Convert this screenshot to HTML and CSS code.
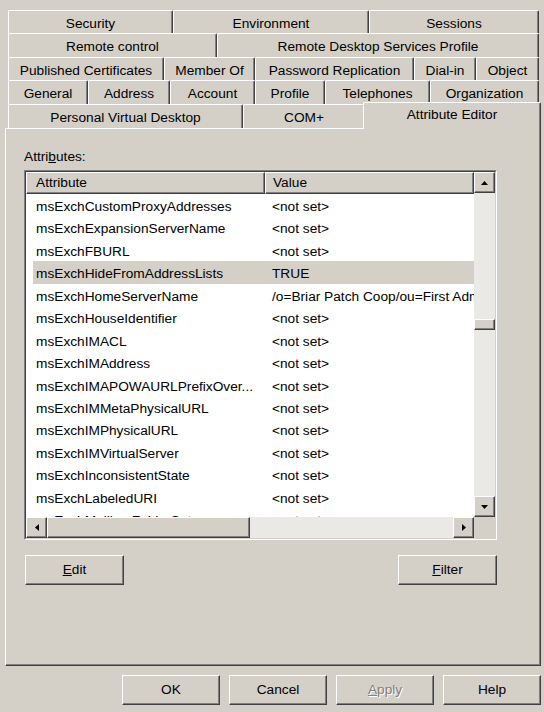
FILE: index.html
```html
<!DOCTYPE html>
<html>
<head>
<meta charset="utf-8">
<link rel="stylesheet" href="styles.css">
</head>
<body>
<div class="dialog">
  <div class="tabs">
    <div class="tabrow r1">
      <div class="tab">Security</div>
      <div class="tab">Environment</div>
      <div class="tab">Sessions</div>
    </div>
    <div class="tabrow r2">
      <div class="tab">Remote control</div>
      <div class="tab">Remote Desktop Services Profile</div>
    </div>
    <div class="tabrow r3">
      <div class="tab">Published Certificates</div>
      <div class="tab">Member Of</div>
      <div class="tab">Password Replication</div>
      <div class="tab">Dial-in</div>
      <div class="tab">Object</div>
    </div>
    <div class="tabrow r4">
      <div class="tab">General</div>
      <div class="tab">Address</div>
      <div class="tab">Account</div>
      <div class="tab">Profile</div>
      <div class="tab">Telephones</div>
      <div class="tab">Organization</div>
    </div>
    <div class="tabrow r5">
      <div class="tab">Personal Virtual Desktop</div>
      <div class="tab">COM+</div>
      <div class="tab sel">Attribute Editor</div>
    </div>
  </div>

  <div class="panel">
    <div class="label">Attri<u>b</u>utes:</div>
    <div class="listbox">
      <div class="listinner">
        <div class="listmain">
          <div class="lvheader">
            <div class="hcell h1">Attribute</div>
            <div class="hcell h2">Value</div>
          </div>
          <div class="lvrows">
            <div class="lvrow"><span class="c1">msExchCustomProxyAddresses</span><span class="c2">&lt;not set&gt;</span></div>
            <div class="lvrow"><span class="c1">msExchExpansionServerName</span><span class="c2">&lt;not set&gt;</span></div>
            <div class="lvrow"><span class="c1">msExchFBURL</span><span class="c2">&lt;not set&gt;</span></div>
            <div class="lvrow hl"><span class="c1">msExchHideFromAddressLists</span><span class="c2">TRUE</span></div>
            <div class="lvrow"><span class="c1">msExchHomeServerName</span><span class="c2">/o=Briar Patch Coop/ou=First Administrative Group/cn=Configuration/cn=Servers</span></div>
            <div class="lvrow"><span class="c1">msExchHouseIdentifier</span><span class="c2">&lt;not set&gt;</span></div>
            <div class="lvrow"><span class="c1">msExchIMACL</span><span class="c2">&lt;not set&gt;</span></div>
            <div class="lvrow"><span class="c1">msExchIMAddress</span><span class="c2">&lt;not set&gt;</span></div>
            <div class="lvrow"><span class="c1">msExchIMAPOWAURLPrefixOver...</span><span class="c2">&lt;not set&gt;</span></div>
            <div class="lvrow"><span class="c1">msExchIMMetaPhysicalURL</span><span class="c2">&lt;not set&gt;</span></div>
            <div class="lvrow"><span class="c1">msExchIMPhysicalURL</span><span class="c2">&lt;not set&gt;</span></div>
            <div class="lvrow"><span class="c1">msExchIMVirtualServer</span><span class="c2">&lt;not set&gt;</span></div>
            <div class="lvrow"><span class="c1">msExchInconsistentState</span><span class="c2">&lt;not set&gt;</span></div>
            <div class="lvrow"><span class="c1">msExchLabeledURI</span><span class="c2">&lt;not set&gt;</span></div>
            <div class="lvrow"><span class="c1">msExchMailboxFolderSet</span><span class="c2">&lt;not set&gt;</span></div>
          </div>
        </div>
        <div class="vscroll">
          <div class="sbtn"><svg width="7" height="4" viewBox="0 0 7 4"><polygon points="0,4 3.5,0 7,4" fill="#000"/></svg></div>
          <div class="vtrack"><div class="vthumb"></div></div>
          <div class="sbtn"><svg width="7" height="4" viewBox="0 0 7 4"><polygon points="0,0 7,0 3.5,4" fill="#000"/></svg></div>
        </div>
        <div class="hscroll">
          <div class="sbtn"><svg width="4" height="7" viewBox="0 0 4 7"><polygon points="4,0 4,7 0,3.5" fill="#000"/></svg></div>
          <div class="hthumb"></div>
          <div class="htrack"></div>
          <div class="sbtn"><svg width="4" height="7" viewBox="0 0 4 7"><polygon points="0,0 4,3.5 0,7" fill="#000"/></svg></div>
        </div>
        <div class="corner"></div>
      </div>
    </div>
    <div class="panelbuttons">
      <div class="btn"><u>E</u>dit</div>
      <div class="btn"><u>F</u>ilter</div>
    </div>
  </div>

  <div class="dlgbuttons">
    <div class="btn dbtn">OK</div>
    <div class="btn dbtn">Cancel</div>
    <div class="btn dbtn disabled"><u>A</u>pply</div>
    <div class="btn dbtn">Help</div>
  </div>
</div>
</body>
</html>
```

FILE: styles.css
```css
* { box-sizing: border-box; }
html, body { margin: 0; padding: 0; }
body {
  background: #d4d0c8;
  font-family: "Liberation Sans", Arial, sans-serif;
  font-size: 13.7px;
  color: #000;
  width: 544px;
  height: 712px;
  overflow: hidden;
}
.dialog { padding: 10px 3px 0 5px; }

/* Tabs */
.tabs { margin-left: 3px; width: 531px; }
.tabrow { display: grid; }
.r1 { height: 23px; grid-template-rows: 23px; grid-template-columns: 165px 196px 170px; }
.r2 { height: 24px; grid-template-rows: 24px; grid-template-columns: 209px 322px; }
.r3 { height: 23px; grid-template-rows: 23px; grid-template-columns: 156px 91px 159px 62px 63px; }
.r4 { height: 24px; grid-template-rows: 24px; grid-template-columns: 80px 82px 85px 70px 105px 109px; }
.r5 { height: 24px; grid-template-rows: 24px; grid-template-columns: 235px 122px 174px; }
.tab {
  border-top: 1px solid #fff;
  border-left: 1px solid #fff;
  border-right: 1px solid #404040;
  box-shadow: inset -1px 0 #808080;
  border-radius: 2px 2px 0 0;
  text-align: center;
  padding-top: 3px;
  line-height: 19px;
  white-space: nowrap;
  overflow: hidden;
}
.r2 .tab, .r4 .tab, .r5 .tab { line-height: 20px; }
.r5 .tab.sel {
  position: relative;
  z-index: 1;
  margin: -2px -2px 0 -2px;
  height: 27px;
  background: #d4d0c8;
  padding-top: 2px;
  line-height: 20px;
}

/* Panel */
.panel {
  height: 538px;
  border-top: 1px solid #fff;
  border-left: 1px solid #fff;
  border-right: 1px solid #404040;
  border-bottom: 1px solid #404040;
  box-shadow: inset -1px -1px #808080;
  padding: 20px 0 0 18px;
}
.label { height: 16px; line-height: 16px; }

.listbox {
  margin-top: 5px;
  width: 473px;
  height: 370px;
  border: 1px solid;
  border-color: #808080 #fff #fff #808080;
}
.listinner {
  width: 471px;
  height: 368px;
  border: 1px solid;
  border-color: #404040 #d4d0c8 #d4d0c8 #404040;
  display: grid;
  grid-template-columns: 448px 21px;
  grid-template-rows: 345px 21px;
}
.listmain { background: #fff; overflow: hidden; }
.lvheader { display: grid; grid-template-columns: 239px 209px; height: 22px; background: #d4d0c8; }
.hcell {
  border-top: 1px solid #fff;
  border-left: 1px solid #fff;
  border-right: 1px solid #404040;
  border-bottom: 1px solid #404040;
  box-shadow: inset -1px -1px #808080;
  line-height: 20px;
  white-space: nowrap;
  overflow: hidden;
}
.h1 { padding-left: 9px; }
.h2 { padding-left: 7px; }

.lvrow {
  margin-left: 7px;
  width: 441px;
  height: 22.45px;
  padding-top: 4px;
  line-height: 18.45px;
  display: grid;
  grid-template-columns: 232px 209px;
  white-space: nowrap;
}
.lvrow.hl { background: #d4d0c8; }
.c1 { padding-left: 3px; overflow: hidden; }
.c2 { padding-left: 7px; overflow: hidden; }

/* Scrollbars */
.sbtn, .vthumb, .hthumb, .btn {
  border: 1px solid;
  border-color: #fff #404040 #404040 #fff;
  box-shadow: inset -1px -1px #808080;
  background: #d4d0c8;
}
.sbtn { display: flex; align-items: center; justify-content: center; }
.sbtn svg { display: block; }
.vscroll { display: flex; flex-direction: column; }
.vscroll .sbtn { height: 21px; flex: none; }
.vtrack { flex: 1; background: #ebe9e5; }
.vthumb { margin-top: 126px; height: 11px; }
.hscroll { display: flex; }
.hscroll .sbtn { width: 21px; flex: none; }
.hthumb { width: 203px; flex: none; }
.htrack { flex: 1; background: #ebe9e5; }
.corner { background: #d4d0c8; }

/* Buttons */
.btn {
  height: 30px;
  width: 99px;
  text-align: center;
  line-height: 28px;
}
.panelbuttons {
  margin-top: 15px;
  width: 473px;
  padding-left: 1px;
  display: flex;
  justify-content: space-between;
}
.dlgbuttons {
  margin-top: 9px;
  padding-left: 117px;
  display: flex;
  gap: 9px;
}
.dbtn { width: 98px; }
.disabled { color: #808080; text-shadow: 1px 1px #fff; }
```
